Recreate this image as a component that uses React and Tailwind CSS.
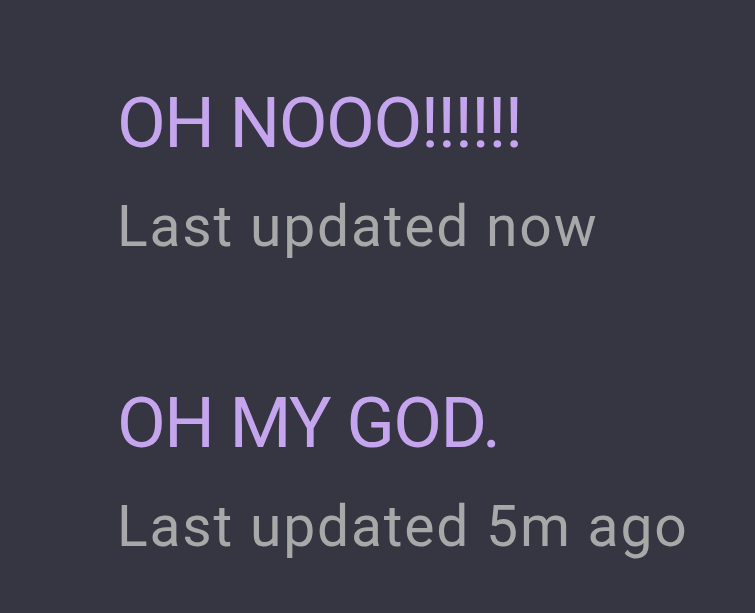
import React from 'react';

const notes = [
  { title: 'OH NOOO!!!!!!', updated: 'Last updated now' },
  { title: 'OH MY GOD.', updated: 'Last updated 5m ago' },
];

const NoteItem = ({ title, updated }) => (
  <div className="flex flex-col">
    <div className="text-[71px] leading-none tracking-[-1.5px] text-[#c5a6ee]">{title}</div>
    <div className="mt-[40px] text-[57px] leading-none tracking-[1.8px] text-[#a8a8a8]">{updated}</div>
  </div>
);

const App = () => {
  return (
    <div
      className="w-[755px] h-[613px] overflow-hidden bg-[#363642] pl-[117px] pt-[87px] flex flex-col gap-[132px]"
      style={{ fontFamily: 'Roboto, "Noto Sans", sans-serif' }}
    >
      {notes.map((n) => (
        <NoteItem key={n.title} title={n.title} updated={n.updated} />
      ))}
    </div>
  );
};

export default App;
